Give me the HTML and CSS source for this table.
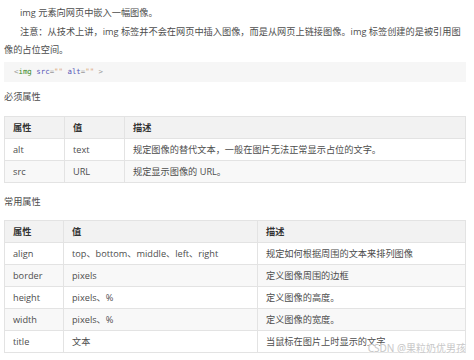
FILE: index.html
```html
<!DOCTYPE html>
<html lang="zh-CN">
<head>
    <meta charset="UTF-8">
    <title>img 元素</title>
    <link rel="stylesheet" href="styles.css">
</head>
<body>
    <div class="article">
        <p class="indent">img 元素向网页中嵌入一幅图像。</p>
        <p class="indent note">注意：从技术上讲，img 标签并不会在网页中插入图像，而是从网页上链接图像。img 标签创建的是被引用图像的占位空间。</p>

        <pre class="code"><span class="tok-punc">&lt;</span><span class="tok-tag">img</span> <span class="tok-attr">src</span><span class="tok-punc">=</span><span class="tok-str">""</span> <span class="tok-attr">alt</span><span class="tok-punc">=</span><span class="tok-str">""</span> <span class="tok-punc">&gt;</span></pre>

        <p class="section-title">必须属性</p>
        <table class="attr-table table-required">
            <thead>
                <tr><th>属性</th><th>值</th><th>描述</th></tr>
            </thead>
            <tbody>
                <tr><td>alt</td><td>text</td><td>规定图像的替代文本，一般在图片无法正常显示占位的文字。</td></tr>
                <tr><td>src</td><td>URL</td><td>规定显示图像的 URL。</td></tr>
            </tbody>
        </table>

        <p class="section-title section-common">常用属性</p>
        <table class="attr-table table-common">
            <thead>
                <tr><th>属性</th><th>值</th><th>描述</th></tr>
            </thead>
            <tbody>
                <tr><td>align</td><td>top、bottom、middle、left、right</td><td>规定如何根据周围的文本来排列图像</td></tr>
                <tr><td>border</td><td>pixels</td><td>定义图像周围的边框</td></tr>
                <tr><td>height</td><td>pixels、%</td><td>定义图像的高度。</td></tr>
                <tr><td>width</td><td>pixels、%</td><td>定义图像的宽度。</td></tr>
                <tr><td>title</td><td>文本</td><td>当鼠标在图片上时显示的文字</td></tr>
            </tbody>
        </table>

        <div class="watermark">CSDN @果粒奶优男孩</div>
    </div>
</body>
</html>
```

FILE: styles.css
```css
* {
    margin: 0;
    padding: 0;
    box-sizing: border-box;
}

body {
    font-family: 'Open Sans', 'Noto Sans CJK SC', sans-serif;
    font-size: 9.2px;
    color: #4d4d4d;
    background: #fff;
}

.article {
    position: relative;
    width: 474px;
    height: 360px;
    padding: 4px 8px 0 4px;
    overflow: hidden;
}

p {
    line-height: 18px;
}

.indent {
    text-indent: 16px;
}

.note {
    margin-top: 1px;
}

.code {
    margin-top: 3px;
    height: 20px;
    padding: 0 10px;
    background: #f6f6f6;
    font-family: 'DejaVu Sans Mono', monospace;
    font-size: 7.4px;
    line-height: 20px;
    color: #888;
}

.tok-punc { color: #999; }
.tok-tag { color: #3c8c2c; }
.tok-attr { color: #5656b8; }
.tok-str { color: #d8a070; }

.section-title {
    margin-top: 6px;
}

.section-common {
    margin-top: 10px;
}

.attr-table {
    width: 462px;
    margin-top: 10px;
    border-collapse: collapse;
    table-layout: fixed;
}

.table-common {
    margin-top: 9px;
}

.attr-table th,
.attr-table td {
    border: 1px solid #e3e3e3;
    line-height: 21px;
    padding: 0 0 0 8px;
    text-align: left;
    white-space: nowrap;
    overflow: hidden;
}

.attr-table th {
    background: #f2f2f2;
    font-weight: 700;
    color: #333;
}

.attr-table tbody tr:nth-child(2n) {
    background: #f8f8f8;
}

.table-required th:nth-child(1) { width: 60px; }
.table-required th:nth-child(2) { width: 60px; }

.table-common th:nth-child(1) { width: 59px; }
.table-common th:nth-child(2) { width: 194px; }

.watermark {
    position: absolute;
    right: 8px;
    bottom: 5px;
    font-family: 'Noto Sans', 'Noto Sans CJK SC', sans-serif;
    font-size: 10px;
    color: #c8c8c8;
    text-shadow: 0 0 2px #fff, 0 0 1px #fff;
}
```
